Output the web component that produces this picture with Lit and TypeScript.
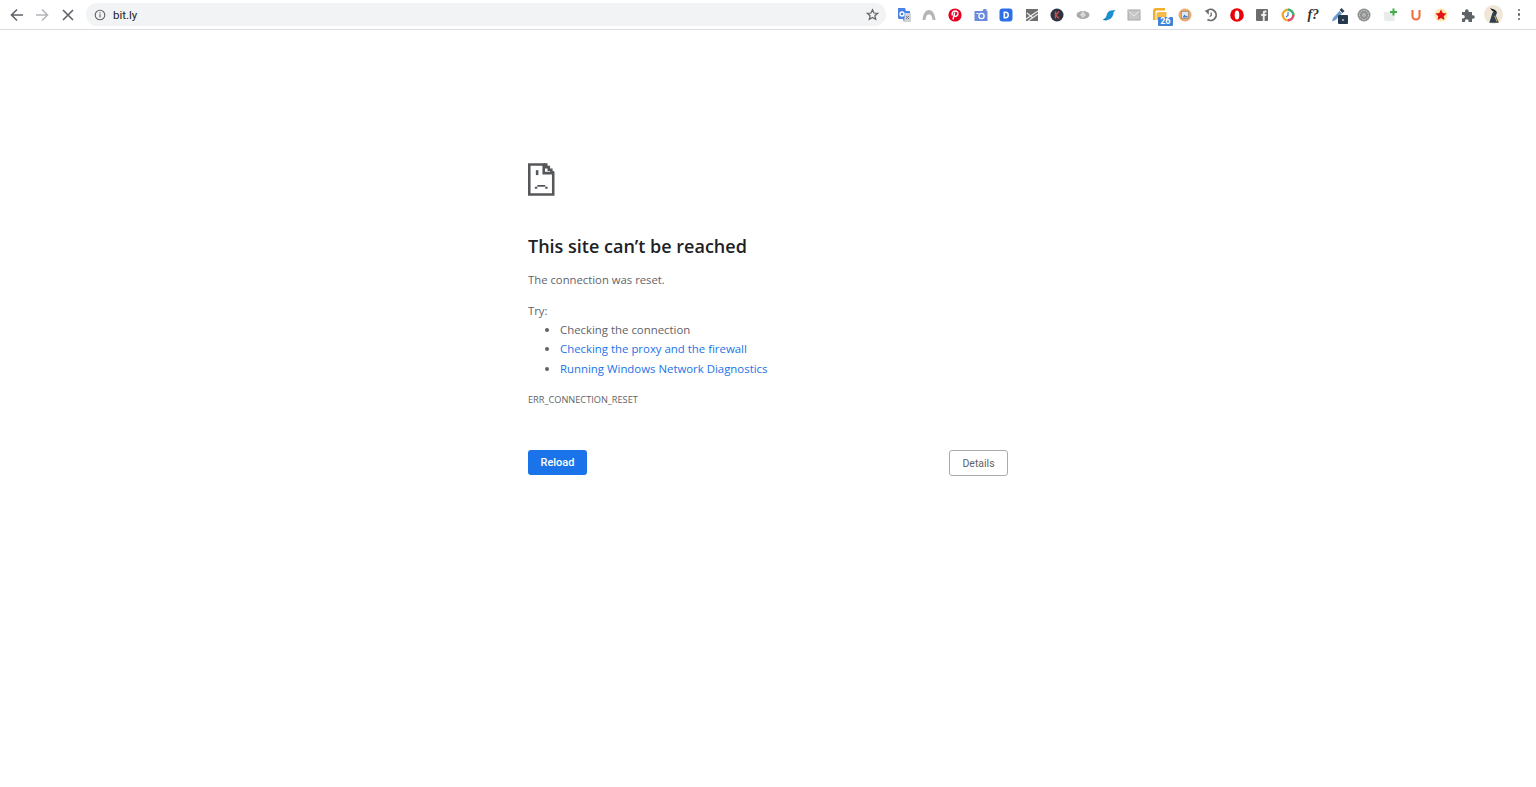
import { LitElement, css, html, svg } from 'lit'
import { customElement } from 'lit/decorators.js'

const ext = [
  svg`<path d="M2 1h7l1 3h4v10l-1 1H8l-1-3H3l-1-1z" fill="#4a83e8"/><path d="M9 6h6v9H8z" fill="#cfd3da"/><circle cx="6" cy="7" r="2" fill="none" stroke="#fff" stroke-width="1.3"/><path d="M10 9l3 3m0-3l-3 3" stroke="#777" fill="none"/>`,
  svg`<path d="M1.500 13C2 6 5 3 8 3s6 3 6.500 10h-3C11 9 10 7.500 8 7.500S5 9 4.500 13z" fill="#b4b6b8"/>`,
  svg`<circle cx="8" cy="8" r="6.600" fill="#e60023"/><path d="M6 12.500l1.700-7M5.400 8.500C4.300 5.500 6.300 4 8.200 4c2 0 3 1.300 2.700 3.200-.3 1.800-2.300 2.900-3.500 1.600" fill="none" stroke="#fff" stroke-width="1.400"/>`,
  svg`<path d="M1.500 4h8l1-2h3v2h1v10H1.500z" fill="#6c8bdc"/><circle cx="8.500" cy="9" r="2.600" fill="none" stroke="#fff" stroke-width="1.300"/><rect x="3.500" y="6" width="2" height="1" fill="#fff"/>`,
  svg`<rect x="1.500" y="1.500" width="13" height="13" rx="3" fill="#2c6fe8"/><path d="M5.500 4.500h2.300c2 0 3.200 1.300 3.200 3.500s-1.200 3.500-3.200 3.500H5.500zm1.700 1.500v4h.6C9 10 9.400 9.300 9.400 8S9 6 7.800 6z" fill="#fff"/>`,
  svg`<rect x="2" y="2" width="12" height="12" fill="#6e6e6e"/><path d="M2 12L14 4M4 14l10-7M3 6l6 5" stroke="#eee" stroke-width="1.200" fill="none"/>`,
  svg`<circle cx="8" cy="8" r="6.500" fill="#2c3442"/><path d="M6.500 4.500v7M10 4.500L6.800 8l3.200 3.500" stroke="#c9524c" stroke-width="1.400" fill="none"/>`,
  svg`<ellipse cx="8" cy="8" rx="6.500" ry="4" fill="#a8aaac"/><path d="M5 8l3-4 3 4-3 3z" fill="#d8d8d8"/>`,
  svg`<path d="M2 12.500c2-.5 3-2 3.500-4C6 5.500 8 3.500 10.500 3.500L14.500 3l-2 2.500c0 4-3 7.500-7 7.500z" fill="#1d8fd1"/><path d="M1.500 13l3.500-2 1 2.500z" fill="#1470a8"/>`,
  svg`<rect x="2" y="3" width="12" height="10" fill="#c5c7c9" stroke="#a6a8aa"/><path d="M2.500 4L8 9l5.500-5" fill="none" stroke="#e8e8e8"/>`,
  svg`<path d="M1 13V4c0-2 1-3 3-3h9v2.500H5c-1 0-1.500.5-1.500 1.500v8z" fill="#f4ae2e"/><path d="M4.500 13V7c0-1 1-2 2-2h8v5H7v3z" fill="#f6bb45"/>`,
  svg`<circle cx="8" cy="8" r="6.500" fill="#e9a86d"/><rect x="4.500" y="4.500" width="7" height="7" fill="#dfe7ef" stroke="#8a7a66" stroke-width=".6"/><path d="M5.500 10.500l2-3 1.500 2 1-1 1 2z" fill="#3f78c2"/>`,
  svg`<path d="M3.500 4.300A5.500 5.500 0 1 1 4.500 12.500" fill="none" stroke="#6b6b6b" stroke-width="1.800"/><path d="M1.500 3.500h4.300v4.300z" fill="#6b6b6b"/><path d="M8.200 5.500v3l-1.500 1" fill="none" stroke="#6b6b6b" stroke-width="1.300"/>`,
  svg`<circle cx="8" cy="8" r="6.800" fill="#e8000b"/><ellipse cx="8" cy="8" rx="2.300" ry="4.600" fill="#fff"/>`,
  svg`<rect x="2" y="2" width="12" height="12" rx="1" fill="#6c6c6c"/><path d="M8.800 14V9H7.200V7h1.600V5.700C8.800 4.300 9.600 3.500 11 3.500h1.500v2h-1c-.5 0-.8.300-.8.800V7h1.800l-.3 2h-1.500v5z" fill="#eee"/>`,
  svg`<circle cx="8" cy="8" r="5.300" fill="#fff" stroke="#f0a72c" stroke-width="2.400"/><path d="M8 2.700A5.300 5.300 0 0 1 13.300 8" fill="none" stroke="#36b37e" stroke-width="2.400"/><path d="M13.300 8A5.300 5.300 0 0 1 8 13.300" fill="none" stroke="#d94f7b" stroke-width="2.400"/><path d="M8 5v3.500L6 10" fill="none" stroke="#3b7bd4" stroke-width="1.200"/>`,
  null,
  svg`<path d="M10.500 1l3 3-2 2-3-3z" fill="#31465c"/><path d="M8.500 4l2.500 2.500-6.500 6.500-3.500 1.500L2 11z" fill="#6c9bd2"/><rect x="7" y="8" width="10" height="9" rx="1" fill="#24384e"/><rect x="11" y="12.500" width="2" height="1" fill="#fff"/>`,
  svg`<circle cx="8" cy="8" r="6.500" fill="#8f9092"/><circle cx="8" cy="8" r="4.500" fill="none" stroke="#dcdcdc" stroke-dasharray="1.500 1"/><circle cx="8" cy="8" r="2" fill="#b5b6b8"/>`,
  svg`<path d="M1.500 5h9l2 2v7h-10z" fill="#e8ecea"/><path d="M10.500 1.500h2v2.500H15v2h-2.500v2.500h-2V6H8V4h2.500z" fill="#3fae49"/>`,
  svg`<path d="M4.500 3v6a3.500 3.500 0 0 0 7 0V3" fill="none" stroke="#f2683a" stroke-width="2"/>`,
  svg`<circle cx="8" cy="8" r="6.500" fill="#ffe9a8"/><path d="M8 2.500l1.700 3.600 3.800.5-2.800 2.600.7 3.800L8 11l-3.400 2 .7-3.800-2.800-2.600 3.800-.5z" fill="#e2111a"/>`,
  svg`<path d="M3 5h3V4a1.800 1.800 0 0 1 3.600 0v1h3.400v3.200h1a1.800 1.800 0 0 1 0 3.600h-1V15H9.600v-1a1.800 1.800 0 0 0-3.600 0v1H3v-3.400h1a1.800 1.800 0 0 0 0-3.600H3z" fill="#5f6368"/>`,
  svg`<circle cx="8" cy="8" r="8" fill="#f0e6d6"/><path d="M4.500 15l2.500-8 2-3 2 2-1 3 2.500 6z" fill="#2e3f52"/><path d="M5 2.500l4 1.500 1.500 2-3.500-1z" fill="#1d1d1d"/><path d="M9 9l2 5" stroke="#c8a05a"/>`,
]

@customElement('app-root')
export class AppRoot extends LitElement {
  static styles = css`
    :host {
      display: block;
      min-height: 787px;
      background: #fff;
      font-family: "Open Sans", "Noto Sans", sans-serif;
      color: #5f6368;
    }
    .toolbar {
      display: flex;
      align-items: center;
      height: 29px;
      border-bottom: 1px solid #dadce0;
      box-sizing: content-box;
    }
    .nav {
      display: flex;
      width: 86px;
      padding-left: 3px;
      box-sizing: border-box;
    }
    .nav button {
      width: 26px;
      height: 26px;
      border: 0;
      padding: 0;
      background: none;
      display: flex;
      align-items: center;
      justify-content: center;
    }
    .omnibox {
      width: 800px;
      height: 23px;
      border-radius: 12px;
      background: #f1f3f4;
      display: flex;
      align-items: center;
      padding: 0 7px 0 8px;
      box-sizing: border-box;
      gap: 7px;
      font-family: "Roboto", sans-serif;
      font-size: 11.500px;
      color: #202124;
    }
    .url { flex: 1; }
    .exts {
      display: flex;
      align-items: center;
      margin-left: 5px;
    }
    .ext {
      width: 25.600px;
      height: 26px;
      display: flex;
      align-items: center;
      justify-content: center;
      position: relative;
    }
    .ext svg { width: 16px; height: 16px; overflow: visible; }
    .ext.avatar svg { width: 19px; height: 19px; margin-left: 2px; }
    .fq {
      font-family: "Liberation Serif", serif;
      font-style: italic;
      font-weight: 700;
      font-size: 14px;
      color: #333;
    }
    .badge {
      position: absolute;
      right: 0;
      bottom: 2px;
      background: #3f83d8;
      color: #fff;
      font: 700 9px/9px "Roboto", sans-serif;
      padding: 0 2px;
      border-radius: 1px;
    }
    .menu {
      display: flex;
      flex-direction: column;
      gap: 2px;
      width: 25px;
      margin-left: 1px;
      align-items: center;
    }
    .menu i {
      width: 2.400px;
      height: 2.400px;
      border-radius: 50%;
      background: #5f6368;
    }
    main {
      width: 480px;
      margin-left: 528px;
      padding-top: 133px;
    }
    .sad { display: block; width: 26.500px; height: 33px; }
    h1 {
      margin: 38px 0 0;
      font-size: 18px;
      line-height: 24px;
      font-weight: 600;
      color: #202124;
    }
    p {
      margin: 12px 0 0;
      font-size: 11.300px;
      line-height: 19.400px;
    }
    ul {
      margin: -1px 0 0;
      padding-left: 32px;
      font-size: 11.400px;
      line-height: 19.400px;
    }
    a { color: #1a73e8; text-decoration: none; }
    .code {
      margin-top: 12px;
      font-size: 9.200px;
      line-height: 19px;
      text-transform: uppercase;
    }
    .buttons {
      display: flex;
      justify-content: space-between;
      align-items: flex-start;
      margin-top: 41px;
    }
    .reload, .details {
      width: 59px;
      font-family: "Roboto", sans-serif;
      border-radius: 3px;
      padding: 0;
      box-sizing: border-box;
    }
    .reload {
      height: 25px;
      background: #1a73e8;
      color: #fff;
      border: 0;
      font-size: 11px;
      font-weight: 500;
    }
    .details {
      height: 26px;
      background: #fff;
      color: #5f6368;
      border: 1px solid #a9abae;
      font-size: 10.500px;
      font-weight: 400;
    }
  `

  render() {
    return html`
      <div class="toolbar">
        <div class="nav">
          <button>
            <svg width="14" height="14" viewBox="0 0 14 14"><path d="M14 7H3M8 1.500L2.500 7 8 12.500" fill="none" stroke="#5f6368" stroke-width="1.600"/></svg>
          </button>
          <button>
            <svg width="14" height="14" viewBox="0 0 14 14"><path d="M1 7h11M7 1.500L12.500 7 7 12.500" fill="none" stroke="#b5b7ba" stroke-width="1.600"/></svg>
          </button>
          <button>
            <svg width="12" height="12" viewBox="0 0 12 12"><path d="M1 1l10 10M11 1L1 11" fill="none" stroke="#5f6368" stroke-width="1.600"/></svg>
          </button>
        </div>
        <div class="omnibox">
          <svg width="12" height="12" viewBox="0 0 12 12"><circle cx="6" cy="6" r="4.800" fill="none" stroke="#5f6368" stroke-width="1.100"/><path d="M6 5.300v3.200M6 3.300v1.100" stroke="#5f6368" stroke-width="1.100"/></svg>
          <span class="url">bit.ly</span>
          <svg width="13" height="13" viewBox="0 0 24 24"><path d="M12 3l2.700 6.200 6.800.6-5.100 4.500 1.500 6.600L12 17.400l-5.900 3.500 1.500-6.600-5.100-4.500 6.800-.6z" fill="none" stroke="#5f6368" stroke-width="2.200"/></svg>
        </div>
        <div class="exts">
          ${ext.map((icon, i) => html`
            <div class="ext ${i === ext.length - 1 ? 'avatar' : ''}">
              ${icon ? html`<svg viewBox="0 0 16 16">${icon}</svg>` : html`<span class="fq">f?</span>`}
              ${i === 10 ? html`<span class="badge">26</span>` : ''}
            </div>
          `)}
          <div class="menu"><i></i><i></i><i></i></div>
        </div>
      </div>
      <main>
        <svg class="sad" viewBox="0 0 27 33">
          <path d="M1.300 1.300H16V10H25.700V31.700H1.300z" fill="none" stroke="#55575a" stroke-width="2.600"/>
          <path d="M16 1.300h2.600v2.600h2.600v2.600h2.600v2.600h2.600" fill="none" stroke="#55575a" stroke-width="2.600"/>
          <path d="M8 7h2.600v5H8z" fill="#55575a"/>
          <path d="M7 26v-2h2.500v-2h8v2H20v2h-2.500v-2h-8v2z" fill="#55575a"/>
        </svg>
        <h1>This site can’t be reached</h1>
        <p>The connection was reset.</p>
        <p>Try:</p>
        <ul>
          <li>Checking the connection</li>
          <li><a>Checking the proxy and the firewall</a></li>
          <li><a>Running Windows Network Diagnostics</a></li>
        </ul>
        <div class="code">ERR_CONNECTION_RESET</div>
        <div class="buttons">
          <button class="reload">Reload</button>
          <button class="details">Details</button>
        </div>
      </main>
    `
  }
}
